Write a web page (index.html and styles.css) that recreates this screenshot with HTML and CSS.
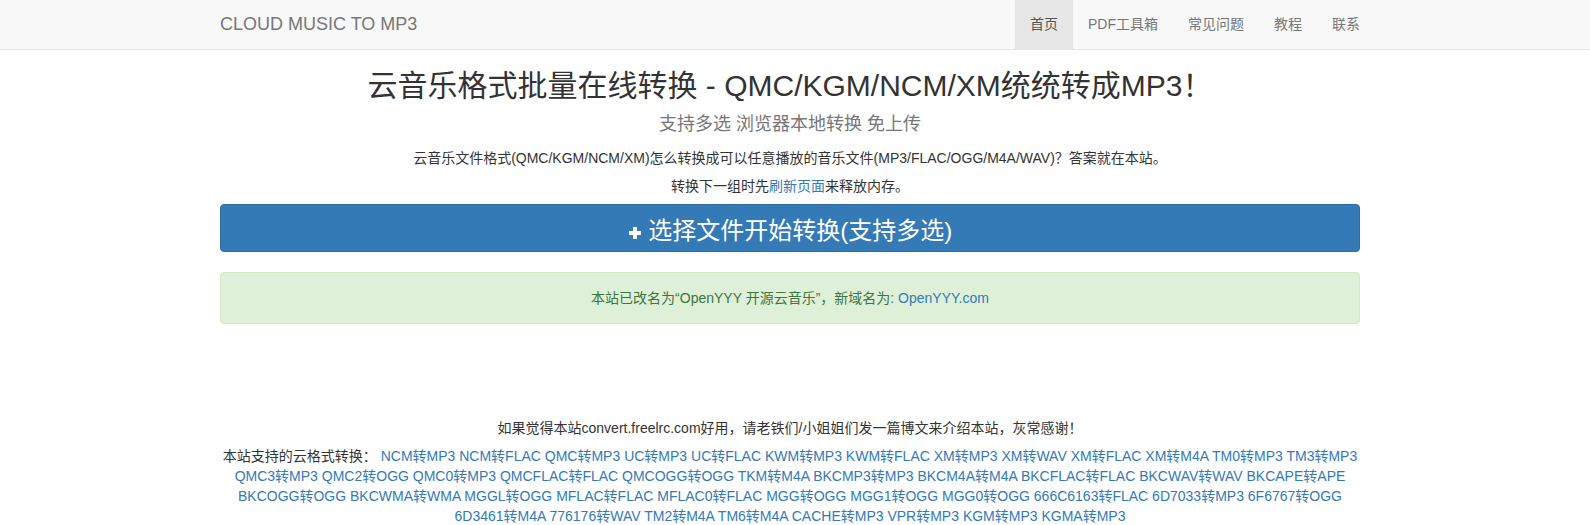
FILE: index.html
```html
<!DOCTYPE html>
<html lang="zh-CN">
<head>
  <meta charset="UTF-8">
  <title>云音乐格式批量在线转换</title>
  <link rel="stylesheet" href="styles.css">
</head>
<body>

  <nav class="navbar">
    <div class="navbar-inner">
      <a class="brand" href="#">CLOUD MUSIC TO MP3</a>
      <ul class="nav">
        <li class="active"><a href="#">首页</a></li>
        <li><a href="#">PDF工具箱</a></li>
        <li><a href="#">常见问题</a></li>
        <li><a href="#">教程</a></li>
        <li><a href="#">联系</a></li>
      </ul>
    </div>
  </nav>

  <main class="container">
    <h1>云音乐格式批量在线转换 - QMC/KGM/NCM/XM统统转成MP3！</h1>
    <h2>支持多选 浏览器本地转换 免上传</h2>
    <p class="intro">云音乐文件格式(QMC/KGM/NCM/XM)怎么转换成可以任意播放的音乐文件(MP3/FLAC/OGG/M4A/WAV)？答案就在本站。</p>
    <p class="intro">转换下一组时先<a href="#">刷新页面</a>来释放内存。</p>

    <button class="btn-select">
      <svg class="icon-plus" width="14" height="14" viewBox="0 0 14 14"><path d="M5 1h4v4h4v4H9v4H5V9H1V5h4z" fill="#fff"/></svg>
      选择文件开始转换(支持多选)
    </button>

    <div class="alert">本站已改名为“OpenYYY 开源云音乐”，新域名为: <a href="#">OpenYYY.com</a></div>

    <p class="thanks">如果觉得本站convert.freelrc.com好用，请老铁们/小姐姐们发一篇博文来介绍本站，灰常感谢！</p>
    <p class="formats">本站支持的云格式转换： <a href="#">NCM转MP3</a> <a href="#">NCM转FLAC</a> <a href="#">QMC转MP3</a> <a href="#">UC转MP3</a> <a href="#">UC转FLAC</a> <a href="#">KWM转MP3</a> <a href="#">KWM转FLAC</a> <a href="#">XM转MP3</a> <a href="#">XM转WAV</a> <a href="#">XM转FLAC</a> <a href="#">XM转M4A</a> <a href="#">TM0转MP3</a> <a href="#">TM3转MP3</a> <a href="#">QMC3转MP3</a> <a href="#">QMC2转OGG</a> <a href="#">QMC0转MP3</a> <a href="#">QMCFLAC转FLAC</a> <a href="#">QMCOGG转OGG</a> <a href="#">TKM转M4A</a> <a href="#">BKCMP3转MP3</a> <a href="#">BKCM4A转M4A</a> <a href="#">BKCFLAC转FLAC</a> <a href="#">BKCWAV转WAV</a> <a href="#">BKCAPE转APE</a> <a href="#">BKCOGG转OGG</a> <a href="#">BKCWMA转WMA</a> <a href="#">MGGL转OGG</a> <a href="#">MFLAC转FLAC</a> <a href="#">MFLAC0转FLAC</a> <a href="#">MGG转OGG</a> <a href="#">MGG1转OGG</a> <a href="#">MGG0转OGG</a> <a href="#">666C6163转FLAC</a> <a href="#">6D7033转MP3</a> <a href="#">6F6767转OGG</a> <a href="#">6D3461转M4A</a> <a href="#">776176转WAV</a> <a href="#">TM2转M4A</a> <a href="#">TM6转M4A</a> <a href="#">CACHE转MP3</a> <a href="#">VPR转MP3</a> <a href="#">KGM转MP3</a> <a href="#">KGMA转MP3</a></p>
  </main>

</body>
</html>
```

FILE: styles.css
```css
body {
  font-family: "Liberation Sans", "Noto Sans CJK SC", sans-serif;
  font-size: 14px;
  line-height: 20px;
  color: #333;
  background-color: #fff;
  margin: 0;
  overflow: hidden;
}
a {
  color: #337ab7;
  text-decoration: none;
}
.navbar {
  background-color: #f8f8f8;
  border-bottom: 1px solid #e7e7e7;
  height: 49px;
}
.navbar-inner {
  width: 1170px;
  margin-left: 205px;
  display: flex;
  justify-content: space-between;
}
.brand {
  color: #777;
  font-size: 18px;
  line-height: 49px;
  padding: 0 15px;
}
.nav {
  display: flex;
  list-style: none;
  margin: 0;
  padding: 0;
}
.nav a {
  display: block;
  color: #777;
  line-height: 49px;
  padding: 0 15px;
}
.nav .active a {
  color: #555;
  background-color: #e7e7e7;
}
.container {
  width: 1140px;
  margin-left: 220px;
  text-align: center;
}
h1 {
  font-size: 30px;
  font-weight: 400;
  line-height: 33px;
  margin: 19px 0 0;
}
h2 {
  font-size: 18px;
  font-weight: 400;
  line-height: 20px;
  color: #777;
  margin: 12px 0 0;
}
.intro {
  margin: 14px 0 0;
  line-height: 14px;
}
.intro:first-of-type {
  margin-top: 17px;
}
.btn-select {
  display: block;
  width: 100%;
  height: 48px;
  margin-top: 11px;
  padding: 0;
  font-family: inherit;
  font-size: 24px;
  color: #fff;
  background-color: #337ab7;
  border: 1px solid #2e6da4;
  border-radius: 4px;
}
.icon-plus {
  vertical-align: -1px;
}
.alert {
  margin-top: 20px;
  height: 50px;
  line-height: 50px;
  color: #3c763d;
  background-color: #dff0d8;
  border: 1px solid #d6e9c6;
  border-radius: 4px;
}
.thanks {
  margin: 94px 0 0;
}
.formats {
  margin: 8px 0 0;
}
```
